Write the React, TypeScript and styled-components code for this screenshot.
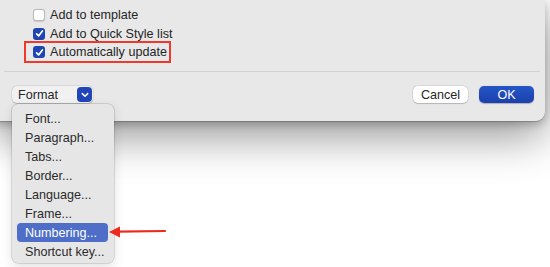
import React from "react";
import styled, { createGlobalStyle } from "styled-components";

const GlobalStyle = createGlobalStyle`
  html, body { margin: 0; padding: 0; background: #ffffff; }
  body { font-family: "Liberation Sans", "Helvetica Neue", Arial, sans-serif; -webkit-font-smoothing: antialiased; }
`;

const Page = styled.div`
  position: relative;
  width: 550px;
  height: 267px;
  overflow: hidden;
  background: #ffffff;
`;

const Dialog = styled.div`
  margin-left: -10px;
  width: 555px;
  height: 121px;
  box-sizing: border-box;
  background: #e8e8e8;
  border-bottom-right-radius: 9px;
  box-shadow: 0 1px 0 rgba(0, 0, 0, 0.16), 0 3px 8px rgba(0, 0, 0, 0.24),
    0 16px 44px rgba(0, 0, 0, 0.4);
  display: flex;
  flex-direction: column;
`;

const OptionList = styled.div`
  display: flex;
  flex-direction: column;
  align-items: flex-start;
  padding: 5px 0 0 43px;
`;

const Row = styled.label<{ $marked?: boolean }>`
  display: flex;
  align-items: center;
  gap: 5px;
  height: 19px;
  font-size: 12.6px;
  color: #262626;
  box-sizing: content-box;
  ${(p) =>
    p.$marked &&
    `
    border: 2px solid #ee3a2c;
    margin: -2px 0 -2px -9px;
    padding: 0 2px 0 7px;
    height: 18px;
  `}
`;

const Box = styled.span<{ $checked?: boolean }>`
  width: 12px;
  height: 12px;
  border-radius: 3px;
  box-sizing: border-box;
  display: flex;
  align-items: center;
  justify-content: center;
  flex: none;
  background: ${(p) => (p.$checked ? "#1f45b3" : "#ffffff")};
  border: ${(p) => (p.$checked ? "none" : "0.5px solid #b8b8b8")};
  box-shadow: ${(p) => (p.$checked ? "none" : "0 0.5px 1px rgba(0,0,0,0.15)")};
`;

const Separator = styled.div`
  height: 1px;
  background: #d3d3d3;
  margin: 10px 5px 0 14px;
`;

const Footer = styled.div`
  display: flex;
  align-items: center;
  justify-content: space-between;
  padding: 14px 11px 0 22px;
`;

const PopupButton = styled.div`
  width: 81px;
  height: 17px;
  box-sizing: border-box;
  display: flex;
  align-items: center;
  justify-content: space-between;
  padding: 0 1px 0 6px;
  border-radius: 5px;
  background: #f1f1f1;
  box-shadow: 0 0 0 0.5px rgba(0, 0, 0, 0.1), 0 0.5px 1px rgba(0, 0, 0, 0.15);
  font-size: 12.6px;
  color: #262626;
`;

const Chevron = styled.span`
  width: 15px;
  height: 15px;
  border-radius: 4px;
  background: #1f45b8;
  display: flex;
  align-items: center;
  justify-content: center;
`;

const ButtonGroup = styled.div`
  display: flex;
  gap: 11px;
`;

const PushButton = styled.div<{ $primary?: boolean }>`
  width: 55px;
  height: 17px;
  border-radius: 5px;
  display: flex;
  align-items: center;
  justify-content: center;
  font-size: 12.6px;
  color: ${(p) => (p.$primary ? "#ffffff" : "#262626")};
  background: ${(p) =>
    p.$primary ? "linear-gradient(#2556c6, #1b40ad)" : "#ffffff"};
  box-shadow: ${(p) =>
    p.$primary
      ? "0 0.5px 1px rgba(0,0,0,0.25)"
      : "0 0 0 0.5px rgba(0,0,0,0.1), 0 0.5px 1px rgba(0,0,0,0.18)"};
`;

const Menu = styled.div`
  position: absolute;
  left: 12px;
  top: 104px;
  width: 102px;
  box-sizing: border-box;
  padding: 5px 6px 2px 5px;
  background: #e6e6e6;
  border-radius: 6px;
  box-shadow: 0 0 0 0.5px rgba(0, 0, 0, 0.22), 0 4px 12px rgba(0, 0, 0, 0.12);
  display: flex;
  flex-direction: column;
`;

const MenuItem = styled.div<{ $active?: boolean }>`
  height: 19px;
  display: flex;
  align-items: center;
  padding-left: 8px;
  border-radius: 4px;
  font-size: 12.6px;
  color: ${(p) => (p.$active ? "#ffffff" : "#2b2b2b")};
  background: ${(p) => (p.$active ? "#4e6ec8" : "transparent")};
`;

const Arrow = styled.svg`
  position: absolute;
  left: 108px;
  top: 225px;
`;

const Check = () => (
  <svg width="9" height="9" viewBox="0 0 9 9">
    <path
      d="M1.6 4.8 L3.6 6.9 L7.4 1.9"
      fill="none"
      stroke="#ffffff"
      strokeWidth="1.7"
      strokeLinecap="round"
      strokeLinejoin="round"
    />
  </svg>
);

const items = [
  "Font...",
  "Paragraph...",
  "Tabs...",
  "Border...",
  "Language...",
  "Frame...",
  "Numbering...",
  "Shortcut key...",
];

export default function App() {
  return (
    <>
      <GlobalStyle />
      <Page>
        <Dialog>
          <OptionList>
            <Row>
              <Box />
              Add to template
            </Row>
            <Row>
              <Box $checked>
                <Check />
              </Box>
              Add to Quick Style list
            </Row>
            <Row $marked>
              <Box $checked>
                <Check />
              </Box>
              Automatically update
            </Row>
          </OptionList>
          <Separator />
          <Footer>
            <PopupButton>
              Format
              <Chevron>
                <svg width="8" height="6" viewBox="0 0 8 6">
                  <path
                    d="M1.3 1.6 L4 4.3 L6.7 1.6"
                    fill="none"
                    stroke="#ffffff"
                    strokeWidth="1.5"
                    strokeLinecap="round"
                    strokeLinejoin="round"
                  />
                </svg>
              </Chevron>
            </PopupButton>
            <ButtonGroup>
              <PushButton>Cancel</PushButton>
              <PushButton $primary>OK</PushButton>
            </ButtonGroup>
          </Footer>
        </Dialog>
        <Menu>
          {items.map((t) => (
            <MenuItem key={t} $active={t === "Numbering..."}>
              {t}
            </MenuItem>
          ))}
        </Menu>
        <Arrow width="60" height="14" viewBox="0 0 60 14">
          <path d="M1 7 L12 1.5 L12 12.5 Z" fill="#ec2a1d" />
          <path d="M10 6.6 L57 6" stroke="#ec2a1d" strokeWidth="2.2" strokeLinecap="round" />
        </Arrow>
      </Page>
    </>
  );
}
